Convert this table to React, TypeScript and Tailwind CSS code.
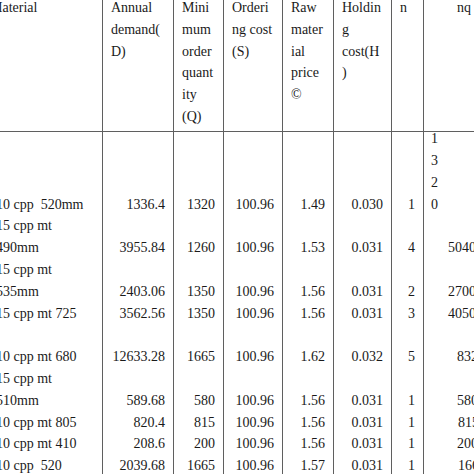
type Row = {
  material: string[]
  lines: number
  values: string[]
  nq: string[]
  nqPad: string
}

const rows: Row[] = [
  {
    material: ['10 cpp  520mm'],
    lines: 4,
    values: ['1336.4', '1320', '100.96', '1.49', '0.030', '1'],
    nq: ['1', '3', '2', '0'],
    nqPad: 'pl-[7px]',
  },
  {
    material: ['15 cpp mt', '490mm'],
    lines: 2,
    values: ['3955.84', '1260', '100.96', '1.53', '0.031', '4'],
    nq: ['5040'],
    nqPad: 'pl-[24px]',
  },
  {
    material: ['15 cpp mt', '535mm'],
    lines: 2,
    values: ['2403.06', '1350', '100.96', '1.56', '0.031', '2'],
    nq: ['2700'],
    nqPad: 'pl-[24px]',
  },
  {
    material: ['15 cpp mt 725'],
    lines: 1,
    values: ['3562.56', '1350', '100.96', '1.56', '0.031', '3'],
    nq: ['4050'],
    nqPad: 'pl-[24px]',
  },
  {
    material: ['', '10 cpp mt 680'],
    lines: 2,
    values: ['12633.28', '1665', '100.96', '1.62', '0.032', '5'],
    nq: ['8325'],
    nqPad: 'pl-[33px]',
  },
  {
    material: ['15 cpp mt', '510mm'],
    lines: 2,
    values: ['589.68', '580', '100.96', '1.56', '0.031', '1'],
    nq: ['580'],
    nqPad: 'pl-[33px]',
  },
  {
    material: ['10 cpp mt 805'],
    lines: 1,
    values: ['820.4', '815', '100.96', '1.56', '0.031', '1'],
    nq: ['815'],
    nqPad: 'pl-[34px]',
  },
  {
    material: ['10 cpp mt 410'],
    lines: 1,
    values: ['208.6', '200', '100.96', '1.56', '0.031', '1'],
    nq: ['200'],
    nqPad: 'pl-[33px]',
  },
  {
    material: ['10 cpp  520'],
    lines: 1,
    values: ['2039.68', '1665', '100.96', '1.57', '0.031', '1'],
    nq: ['1665'],
    nqPad: 'pl-[34px]',
  },
]

const headers: string[][] = [
  ['Annual', 'demand(', 'D)'],
  ['Mini', 'mum', 'order', 'quant', 'ity', '(Q)'],
  ['Orderi', 'ng cost', '(S)'],
  ['Raw', 'mater', 'ial', 'price', '©'],
  ['Holdin', 'g', 'cost(H', ')'],
  ['n'],
]

const grid = 'grid grid-cols-[122px_71px_50px_59px_51px_58px_32px_77px]'
const line = 'border-l border-[#5f5f5f]'

function Lines({ items }: { items: string[] }) {
  return (
    <>
      {items.map((t, i) => (
        <div key={i} className="h-[21.8px] whitespace-pre">
          {t}
        </div>
      ))}
    </>
  )
}

export default function App() {
  return (
    <div className="w-[474px] h-[474px] overflow-hidden bg-white text-[#1a1a1a] text-[14px] leading-[21.8px] font-['Liberation_Serif',_'Times_New_Roman',_serif]">
      <div className="w-[520px] -ml-[20px] -mt-[3px]">
        {/* Header */}
        <div className={`${grid} border-b border-[#5f5f5f]`}>
          <div className="pl-[10px] pb-[3.5px]">
            <Lines items={['Material']} />
          </div>
          {headers.map((h, i) => (
            <div key={i} className={`${line} pl-2 pr-1 pb-[3.5px]`}>
              <Lines items={h} />
            </div>
          ))}
          <div className={`${line} pl-[33px]`}>
            <Lines items={['nq']} />
          </div>
        </div>

        {/* Body */}
        <div className="-mt-[4px]">
          {rows.map((r, ri) => (
            <div key={ri} className={grid}>
              <div className="pl-[16px] flex flex-col justify-end">
                <Lines items={r.material} />
              </div>
              {r.values.map((v, vi) => (
                <div key={vi} className={`${line} pr-2 text-right flex flex-col justify-end`}>
                  <Lines items={[v]} />
                </div>
              ))}
              <div className={`${line} ${r.nqPad} flex flex-col justify-end`}>
                <Lines items={r.nq} />
              </div>
            </div>
          ))}
          <div className={`${grid} h-[40px]`}>
            <div />
            {[0, 1, 2, 3, 4, 5, 6].map((k) => (
              <div key={k} className={line} />
            ))}
          </div>
        </div>
      </div>
    </div>
  )
}
